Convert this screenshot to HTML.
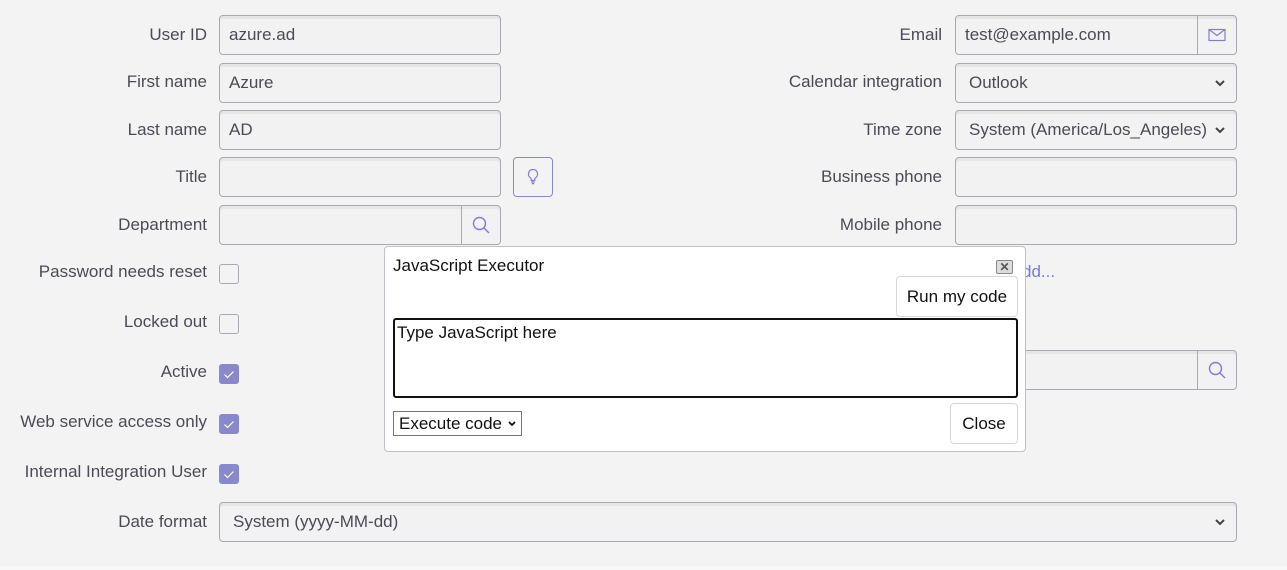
<!DOCTYPE html>
<html><head><style>
*{box-sizing:border-box;margin:0;padding:0}
body{width:1287px;height:570px;background:#f3f3f3;font-family:"Liberation Sans",sans-serif;font-size:17px;color:#4b4b55;position:relative;overflow:hidden}
.a{position:absolute}
.lbl{position:absolute;text-align:right;white-space:nowrap}
.in{position:absolute;height:40px;border:1px solid #a9a9b3;border-radius:4px;background:#f2f2f2;box-shadow:inset 0 3px 0 #e6e6e8;padding:0 0 0 9px;line-height:38px;color:#4b4b55}
.btn{position:absolute;top:0;right:0;width:39px;height:38px;border-left:1px solid #a9a9b3;display:flex;align-items:center;justify-content:center}
.chev{position:absolute;right:10px;top:13px}
.cb{position:absolute;left:219px;width:20px;height:20px;border:1px solid #a9a9b3;border-radius:3px;background:#f3f3f3}
.cb.on{background:#8a88cc;border-color:#8a88cc}
</style></head><body>
<div class="lbl" style="right:1080px;top:25px">User ID</div>
<div class="lbl" style="right:1080px;top:72px">First name</div>
<div class="lbl" style="right:1080px;top:120px">Last name</div>
<div class="lbl" style="right:1080px;top:167px">Title</div>
<div class="lbl" style="right:1080px;top:215px">Department</div>
<div class="lbl" style="right:1080px;top:262px">Password needs reset</div>
<div class="lbl" style="right:1080px;top:312px">Locked out</div>
<div class="lbl" style="right:1080px;top:362px">Active</div>
<div class="lbl" style="right:1080px;top:412px">Web service access only</div>
<div class="lbl" style="right:1080px;top:462px">Internal Integration User</div>
<div class="lbl" style="right:1080px;top:512px">Date format</div>

<div class="in" style="left:219px;top:15px;width:282px">azure.ad</div>
<div class="in" style="left:219px;top:63px;width:282px">Azure</div>
<div class="in" style="left:219px;top:110px;width:282px">AD</div>
<div class="in" style="left:219px;top:157px;width:282px"></div>
<div class="a" style="left:513px;top:157px;width:40px;height:40px;border:1px solid #8a88cc;border-radius:4px;display:flex;align-items:center;justify-content:center">
<svg width="14" height="18" viewBox="0 0 14 18" fill="none" stroke="#7f7dd0" stroke-width="1.2"><path d="M7 1.5a4.5 4.5 0 0 0-2.6 8.2c.6.5.9 1.2.9 1.9v.9h3.4v-.9c0-.7.3-1.4.9-1.9A4.5 4.5 0 0 0 7 1.5z"/><path d="M5.3 14h3.4M5.8 15.6h2.4"/></svg></div>
<div class="in" style="left:219px;top:205px;width:282px"><div class="btn"><svg width="18" height="18" viewBox="0 0 18 18" fill="none" stroke="#7f7dd0" stroke-width="1.4"><circle cx="7.5" cy="7.5" r="6"/><path d="M12 12l5 5"/></svg></div></div>

<div class="cb" style="top:264px"></div>
<div class="cb" style="top:314px"></div>
<div class="cb on" style="top:364px"><svg width="18" height="18" viewBox="0 0 18 18" fill="none" stroke="#fff" stroke-width="1.2"><path d="M4.5 9.5l3 3 6-6"/></svg></div>
<div class="cb on" style="top:414px"><svg width="18" height="18" viewBox="0 0 18 18" fill="none" stroke="#fff" stroke-width="1.2"><path d="M4.5 9.5l3 3 6-6"/></svg></div>
<div class="cb on" style="top:464px"><svg width="18" height="18" viewBox="0 0 18 18" fill="none" stroke="#fff" stroke-width="1.2"><path d="M4.5 9.5l3 3 6-6"/></svg></div>
<div class="in" style="left:219px;top:502px;width:1018px;padding-left:13px">System (yyyy-MM-dd)<svg class="chev" width="12" height="12" viewBox="0 0 12 12" fill="none" stroke="#444" stroke-width="2"><path d="M2 4l4 4 4-4"/></svg></div>

<div class="lbl" style="right:345px;top:25px">Email</div>
<div class="lbl" style="right:345px;top:72px">Calendar integration</div>
<div class="lbl" style="right:345px;top:120px">Time zone</div>
<div class="lbl" style="right:345px;top:167px">Business phone</div>
<div class="lbl" style="right:345px;top:215px">Mobile phone</div>
<div class="in" style="left:955px;top:15px;width:282px">test@example.com<div class="btn"><svg width="18" height="14" viewBox="0 0 18 14" fill="none" stroke="#7f7dd0" stroke-width="1.2"><rect x="1" y="1.5" width="16" height="11"/><path d="M1 1.5l8 6 8-6"/></svg></div></div>
<div class="in" style="left:955px;top:63px;width:282px;padding-left:13px">Outlook<svg class="chev" width="12" height="12" viewBox="0 0 12 12" fill="none" stroke="#444" stroke-width="2"><path d="M2 4l4 4 4-4"/></svg></div>
<div class="in" style="left:955px;top:110px;width:282px;padding-left:13px">System (America/Los_Angeles)<svg class="chev" width="12" height="12" viewBox="0 0 12 12" fill="none" stroke="#444" stroke-width="2"><path d="M2 4l4 4 4-4"/></svg></div>
<div class="in" style="left:955px;top:157px;width:282px"></div>
<div class="in" style="left:955px;top:205px;width:282px"></div>
<div class="a" style="left:1022px;top:262px;color:#7b7bd0">dd...</div>
<div class="in" style="left:1010px;top:350px;width:227px"><div class="btn"><svg width="18" height="18" viewBox="0 0 18 18" fill="none" stroke="#7f7dd0" stroke-width="1.4"><circle cx="7.5" cy="7.5" r="6"/><path d="M12 12l5 5"/></svg></div></div>

<div class="a" style="left:384px;top:246px;width:642px;height:206px;background:#fff;border:1px solid #bfc0c8;border-radius:4px;color:#111">
 <div class="a" style="left:8px;top:9px">JavaScript Executor</div>
 <div class="a" style="left:611px;top:13px;width:17px;height:14px;border:1px solid #888;background:#ddd;border-radius:2px;font-size:12px;line-height:12px;text-align:center;color:#555;font-weight:bold">✕</div>
 <div class="a" style="left:511px;top:29px;width:122px;height:41px;border:1px solid #d8d8dc;border-radius:4px;line-height:39px;text-align:center">Run my code</div>
 <div class="a" style="left:8px;top:71px;width:625px;height:80px;border:2px solid #111;border-radius:3px;padding:3px 2px;line-height:20px">Type JavaScript here</div>
 <div class="a" style="left:8px;top:164px;width:129px;height:25px;border:1px solid #767676;line-height:23px;padding-left:5px;white-space:nowrap">Execute code <svg width="10" height="10" viewBox="0 0 10 10" fill="none" stroke="#111" stroke-width="1.8"><path d="M2 3l3 3 3-3"/></svg></div>
 <div class="a" style="left:565px;top:156px;width:68px;height:41px;border:1px solid #d8d8dc;border-radius:4px;line-height:39px;text-align:center">Close</div>
</div>
<div class="a" style="left:0;top:566px;width:1287px;height:4px;background:#f8f8f8"></div>
</body></html>
